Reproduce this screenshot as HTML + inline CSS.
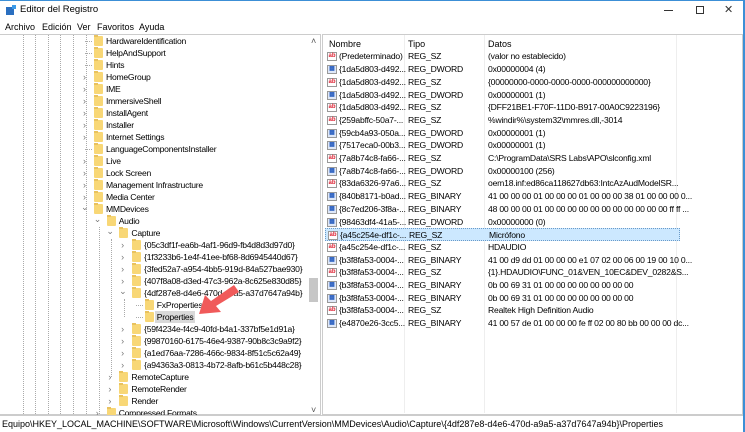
<!DOCTYPE html>
<html><head><meta charset="utf-8"><style>
*{margin:0;padding:0;box-sizing:border-box}
body{width:745px;height:432px;overflow:hidden;background:#fff;font-family:"Liberation Sans",sans-serif;font-size:9px;color:#000;position:relative}
.abs{position:absolute;white-space:nowrap}
#win{position:absolute;left:0;top:0;width:745px;height:432px;border-right:2px solid #3c8fd6;border-top:1px solid #3c8fd6}
.tree div.r{position:absolute;height:12px;line-height:12px;font-size:8.6px;letter-spacing:-0.25px}
.fold{position:absolute;width:9px;height:10px;background:#f8d776;border-radius:1px}
.fold:before{content:"";position:absolute;left:0;top:-1px;width:4px;height:2px;background:#e9c25e}
.chev{position:absolute;font-size:9px;color:#777;line-height:12px}
.rr{position:absolute;left:325px;height:12.7px;line-height:12.7px;width:355px;font-size:8.6px;letter-spacing:-0.2px}
.ico{position:absolute;left:2px;top:2px;width:10px;height:9px;border:1px solid #999;font-size:6px;line-height:7px;text-align:center;font-weight:bold;letter-spacing:0}
.sz{color:#d23;background:#fff}
.bn{color:#2a5fc0;background:#dfe8f8}
.vd{position:absolute;width:0;border-left:1px dotted #aaa}
</style></head><body>
<div id="win"></div>
<div class="abs" style="left:6px;top:5px;width:10px;height:10px">
<div style="position:absolute;left:0;top:2px;width:8px;height:8px;background:#2a6fc0"></div>
<div style="position:absolute;left:6px;top:0;width:4px;height:4px;background:#3b9ae8"></div></div>
<div class="abs" style="left:20px;top:4px;font-size:9.5px">Editor del Registro</div>
<div class="abs" style="left:664px;top:10px;width:9px;height:1px;background:#333"></div>
<div class="abs" style="left:696px;top:6px;width:8px;height:8px;border:1px solid #333"></div>
<div class="abs" style="left:724px;top:3px;font-size:11px;color:#333">✕</div>
<div class="abs" style="left:5px;top:22px">Archivo</div>
<div class="abs" style="left:42px;top:22px">Edición</div>
<div class="abs" style="left:77px;top:22px">Ver</div>
<div class="abs" style="left:97px;top:22px">Favoritos</div>
<div class="abs" style="left:139px;top:22px">Ayuda</div>
<div class="abs" style="left:0;top:34px;width:321px;height:381px;border:1px solid #ccc;border-left:none"></div>
<div class="abs" style="left:322px;top:34px;width:421px;height:381px;border:1px solid #ccc"></div>
<div class="vd" style="left:23px;top:35px;height:379px"></div>
<div class="vd" style="left:35px;top:35px;height:379px"></div>
<div class="vd" style="left:48px;top:35px;height:379px"></div>
<div class="vd" style="left:60px;top:35px;height:379px"></div>
<div class="vd" style="left:73px;top:35px;height:379px"></div>
<div class="vd" style="left:86px;top:35px;height:379px"></div>
<div class="vd" style="left:99px;top:227px;height:187px"></div>
<div class="vd" style="left:111px;top:239px;height:138px"></div>
<div class="vd" style="left:124px;top:299px;height:18px"></div>
<div class="tree" id="tree"></div>
<div class="abs" style="left:309px;top:35px;width:11px;height:379px;background:#fff"></div>
<div class="abs" style="left:311px;top:36px;font-size:9px;color:#555">˄</div>
<div class="abs" style="left:311px;top:405px;font-size:9px;color:#555">˅</div>
<div class="abs" style="left:309px;top:278px;width:9px;height:24px;background:#c6c6c6"></div>
<div class="abs" style="left:329px;top:39px">Nombre</div>
<div class="abs" style="left:408px;top:39px">Tipo</div>
<div class="abs" style="left:488px;top:39px">Datos</div>
<div class="abs" style="left:404px;top:35px;width:1px;height:378px;background:#eee"></div>
<div class="abs" style="left:484px;top:35px;width:1px;height:378px;background:#eee"></div>
<div class="abs" style="left:676px;top:35px;width:1px;height:378px;background:#eee"></div>
<div id="rows"></div>
<div class="abs" style="left:0;top:415px;width:743px;height:17px;background:#fff;border-top:1px solid #ccc"></div>
<div class="abs" style="left:2px;top:419px;font-size:9px">Equipo\HKEY_LOCAL_MACHINE\SOFTWARE\Microsoft\Windows\CurrentVersion\MMDevices\Audio\Capture\{4df287e8-d4e6-470d-a9a5-a37d7647a94b}\Properties</div>
<svg class="abs" style="left:0;top:0" width="745" height="432"><polygon points="199,314 205,295 211,301 234,285 239,292 216,306 221,312" fill="#f05a5a"/></svg>
<script>
var t=[[0,"HardwareIdentification",0],[0,"HelpAndSupport",0],[0,"Hints",0],[0,"HomeGroup",1],[0,"IME",1],[0,"ImmersiveShell",1],[0,"InstallAgent",1],[0,"Installer",1],[0,"Internet Settings",1],[0,"LanguageComponentsInstaller",0],[0,"Live",1],[0,"Lock Screen",1],[0,"Management Infrastructure",1],[0,"Media Center",1],[0,"MMDevices",2],[1,"Audio",2],[2,"Capture",2],[3,"{05c3df1f-ea6b-4af1-96d9-fb4d8d3d97d0}",1],[3,"{1f3233b6-1e4f-41ee-bf68-8d6945440d67}",1],[3,"{3fed52a7-a954-4bb5-919d-84a527bae930}",1],[3,"{407f8a08-d3ed-47c3-962a-8c625e830d85}",1],[3,"{4df287e8-d4e6-470d-a9a5-a37d7647a94b}",2],[4,"FxProperties",0],[4,"Properties",0],[3,"{59f4234e-f4c9-40fd-b4a1-337bf5e1d91a}",1],[3,"{99870160-6175-46e4-9387-90b8c3c9a9f2}",1],[3,"{a1ed76aa-7286-466c-9834-8f51c5c62a49}",1],[3,"{a94363a3-0813-4b72-8afb-b61c5b448c28}",1],[2,"RemoteCapture",1],[2,"RemoteRender",1],[2,"Render",1],[1,"Compressed Formats",1]];
var h="";t.forEach(function(e,i){var y=35+i*12,x=94+e[0]*12.7;
if(e[2]==1)h+='<div class="chev" style="left:'+(x-11)+'px;top:'+y+'px">›</div>';
if(e[2]==2)h+='<div class="chev" style="left:'+(x-13)+'px;top:'+(y-2)+'px">⌄</div>';
if(e[2]==0)h+='<div class="abs" style="left:'+(x-9)+'px;top:'+(y+6)+'px;width:7px;border-top:1px dotted #aaa"></div>';
h+='<div class="fold" style="left:'+x+'px;top:'+(y+1)+'px"></div>';
var sel=e[1]=="Properties";
h+='<div class="r" style="left:'+(x+12)+'px;top:'+y+'px;'+(sel?'background:#d9d9d9;padding:0 2px;left:'+(x+10)+'px;':'')+'">'+e[1]+'</div>';});
document.getElementById("tree").innerHTML=h;
var r=[["s","(Predeterminado)","REG_SZ","(valor no establecido)"],["b","{1da5d803-d492...","REG_DWORD","0x00000004 (4)"],["s","{1da5d803-d492...","REG_SZ","{00000000-0000-0000-0000-000000000000}"],["b","{1da5d803-d492...","REG_DWORD","0x00000001 (1)"],["s","{1da5d803-d492...","REG_SZ","{DFF21BE1-F70F-11D0-B917-00A0C9223196}"],["s","{259abffc-50a7-...","REG_SZ","%windir%\\system32\\mmres.dll,-3014"],["b","{59cb4a93-050a...","REG_DWORD","0x00000001 (1)"],["b","{7517eca0-00b3...","REG_DWORD","0x00000001 (1)"],["s","{7a8b74c8-fa66-...","REG_SZ","C:\\ProgramData\\SRS Labs\\APO\\slconfig.xml"],["b","{7a8b74c8-fa66-...","REG_DWORD","0x00000100 (256)"],["s","{83da6326-97a6...","REG_SZ","oem18.inf:ed86ca118627db63:IntcAzAudModelSR..."],["b","{840b8171-b0ad...","REG_BINARY","41 00 00 00 01 00 00 00 01 00 00 00 38 01 00 00 00 0..."],["b","{8c7ed206-3f8a-...","REG_BINARY","48 00 00 00 01 00 00 00 00 00 00 00 00 00 00 00 ff ff ..."],["b","{98463df4-41a5-...","REG_DWORD","0x00000000 (0)"],["s","{a45c254e-df1c-...","REG_SZ","Micrófono"],["s","{a45c254e-df1c-...","REG_SZ","HDAUDIO"],["b","{b3f8fa53-0004-...","REG_BINARY","41 00 d9 dd 01 00 00 00 e1 07 02 00 06 00 19 00 10 0..."],["s","{b3f8fa53-0004-...","REG_SZ","{1}.HDAUDIO\\FUNC_01&VEN_10EC&DEV_0282&S..."],["b","{b3f8fa53-0004-...","REG_BINARY","0b 00 69 31 01 00 00 00 00 00 00 00 00"],["b","{b3f8fa53-0004-...","REG_BINARY","0b 00 69 31 01 00 00 00 00 00 00 00 00"],["s","{b3f8fa53-0004-...","REG_SZ","Realtek High Definition Audio"],["b","{e4870e26-3cc5...","REG_BINARY","41 00 57 de 01 00 00 00 fe ff 02 00 80 bb 00 00 00 dc..."]];
var g="";r.forEach(function(e,i){var y=50.4+i*12.7;var sel=i==14;
g+='<div class="rr" style="top:'+y+'px;'+(sel?'background:#cce8ff;border:1px dotted #6a9ac8;':'')+'"><div class="ico '+(e[0]=="s"?"sz":"bn")+'">'+(e[0]=="s"?"ab":"▦")+'</div><span class="abs" style="left:14px">'+e[1]+'</span><span class="abs" style="left:83px">'+e[2]+'</span><span class="abs" style="left:163px">'+e[3]+'</span></div>';});
document.getElementById("rows").innerHTML=g;
</script>
</body></html>
